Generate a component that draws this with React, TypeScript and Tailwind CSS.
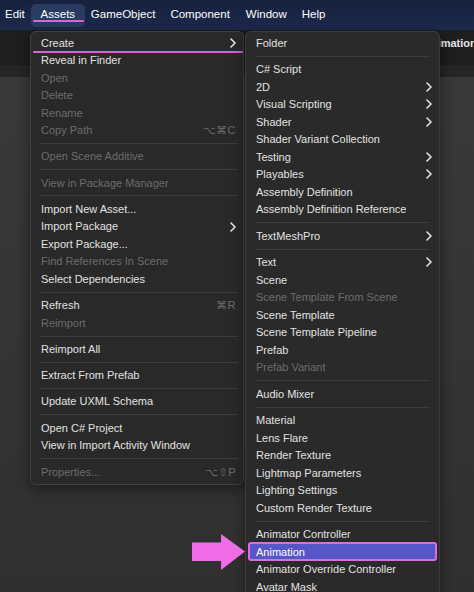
import React from "react";

type Row =
  | { sep: true }
  | {
      sep?: false;
      label: string;
      off?: boolean;
      keys?: string;
      sub?: boolean;
      mark?: "underline" | "pick";
    };

const assetsMenu: Row[] = [
  { label: "Create", sub: true, mark: "underline" },
  { label: "Reveal in Finder" },
  { label: "Open", off: true },
  { label: "Delete", off: true },
  { label: "Rename", off: true },
  { label: "Copy Path", off: true, keys: "⌥⌘C" },
  { sep: true },
  { label: "Open Scene Additive", off: true },
  { sep: true },
  { label: "View in Package Manager", off: true },
  { sep: true },
  { label: "Import New Asset..." },
  { label: "Import Package", sub: true },
  { label: "Export Package..." },
  { label: "Find References In Scene", off: true },
  { label: "Select Dependencies" },
  { sep: true },
  { label: "Refresh", keys: "⌘R" },
  { label: "Reimport", off: true },
  { sep: true },
  { label: "Reimport All" },
  { sep: true },
  { label: "Extract From Prefab" },
  { sep: true },
  { label: "Update UXML Schema" },
  { sep: true },
  { label: "Open C# Project" },
  { label: "View in Import Activity Window" },
  { sep: true },
  { label: "Properties...", off: true, keys: "⌥⇧P" },
];

const createMenu: Row[] = [
  { label: "Folder" },
  { sep: true },
  { label: "C# Script" },
  { label: "2D", sub: true },
  { label: "Visual Scripting", sub: true },
  { label: "Shader", sub: true },
  { label: "Shader Variant Collection" },
  { label: "Testing", sub: true },
  { label: "Playables", sub: true },
  { label: "Assembly Definition" },
  { label: "Assembly Definition Reference" },
  { sep: true },
  { label: "TextMeshPro", sub: true },
  { sep: true },
  { label: "Text", sub: true },
  { label: "Scene" },
  { label: "Scene Template From Scene", off: true },
  { label: "Scene Template" },
  { label: "Scene Template Pipeline" },
  { label: "Prefab" },
  { label: "Prefab Variant", off: true },
  { sep: true },
  { label: "Audio Mixer" },
  { sep: true },
  { label: "Material" },
  { label: "Lens Flare" },
  { label: "Render Texture" },
  { label: "Lightmap Parameters" },
  { label: "Lighting Settings" },
  { label: "Custom Render Texture" },
  { sep: true },
  { label: "Animator Controller" },
  { label: "Animation", mark: "pick" },
  { label: "Animator Override Controller" },
  { label: "Avatar Mask" },
];

function Chevron() {
  return (
    <svg width="6" height="10" viewBox="0 0 6 10" className="shrink-0">
      <path d="M1 1 L5 5 L1 9" fill="none" stroke="#e4e4e4" strokeWidth="1.6" strokeLinecap="round" strokeLinejoin="round" />
    </svg>
  );
}

function MenuRows({ rows, sepClass }: { rows: Row[]; sepClass: string }) {
  return (
    <>
      {rows.map((row, i) => {
        if (row.sep) return <div key={i} className={`h-px bg-[#3d3d3d] ${sepClass}`} />;
        const text = row.off ? "text-[#6c6c6c]" : "text-[#e2e2e2]";
        if (row.mark === "pick") {
          return (
            <div key={i} className="h-[19px] -my-[0.75px] mx-[2px] flex items-center pl-[6px] pr-[7px] rounded-[3px] bg-[#5557c9] border-2 border-[#dc6ce0] text-white">
              <span className="flex-1">{row.label}</span>
            </div>
          );
        }
        return (
          <div key={i} className={`relative h-[17.5px] flex items-center pl-[10px] pr-[7px] ${text}`}>
            <span className="flex-1 whitespace-nowrap">{row.label}</span>
            {row.keys && <span className="text-[#6c6c6c] tracking-[0.5px]">{row.keys}</span>}
            {row.sub && <Chevron />}
            {row.mark === "underline" && (
              <span className="absolute left-[2px] right-0 bottom-[-1px] h-[2px] rounded-full bg-[#d465d8]" />
            )}
          </div>
        );
      })}
    </>
  );
}

export default function App() {
  return (
    <div
      className="relative w-[474px] h-[592px] overflow-hidden bg-[#323232] text-[11px]"
      style={{ fontFamily: '"Liberation Sans", "DejaVu Sans", Arial, sans-serif' }}
    >
      {/* menu bar */}
      <div className="h-[30px] flex items-center bg-gradient-to-b from-[#17213d] to-[#1c2a4d] text-white text-[11.5px]">
        <span className="ml-[5px]">Edit</span>
        <span className="relative ml-[6px] w-[54px] h-[23px] flex items-center justify-center rounded-[5px] bg-[#2a3a60]">
          Assets
          <span className="absolute left-[2px] right-[1px] bottom-[5px] h-[2px] rounded-full bg-[#d36ad8]" />
        </span>
        <span className="ml-[6px]">GameObject</span>
        <span className="ml-[15px]">Component</span>
        <span className="ml-[16px]">Window</span>
        <span className="ml-[15px]">Help</span>
      </div>

      {/* editor behind */}
      <div className="h-[36px] bg-[#1e1e1e] flex items-start pt-[5px]">
        <span className="ml-[423px] whitespace-nowrap font-bold text-[#e8e8e8]">Animation-Clip</span>
      </div>
      <div className="h-[11px] bg-[#262626] border-t border-[#2c2c2c]" />
      <div className="h-[515px] bg-gradient-to-b from-[#393939] to-[#303030]" />

      {/* Assets menu */}
      <div className="absolute left-[30px] top-[31px] w-[214px] pt-[2px] pb-[3px] rounded-[6px] bg-[#292929] border border-[#414141] shadow-[0_4px_14px_rgba(0,0,0,0.45)]">
        <MenuRows rows={assetsMenu} sepClass="my-[3.9px] ml-[9px] mr-[5px]" />
      </div>

      {/* Create submenu */}
      <div className="absolute left-[245px] top-[31px] w-[195px] h-[580px] pt-[2px] rounded-t-[6px] bg-[#2a2a2a] border border-[#3c3c3c] shadow-[0_4px_14px_rgba(0,0,0,0.45)]">
        <MenuRows rows={createMenu} sepClass="my-[4px] ml-[10px] mr-[9px]" />
      </div>

      {/* pointer arrow */}
      <svg className="absolute left-[190px] top-[531px]" width="58" height="42" viewBox="0 0 58 42">
        <polygon points="2,11.5 31,11.5 31,3 55,20.5 31,39 31,30 2,30" fill="#f06de8" />
      </svg>
    </div>
  );
}
